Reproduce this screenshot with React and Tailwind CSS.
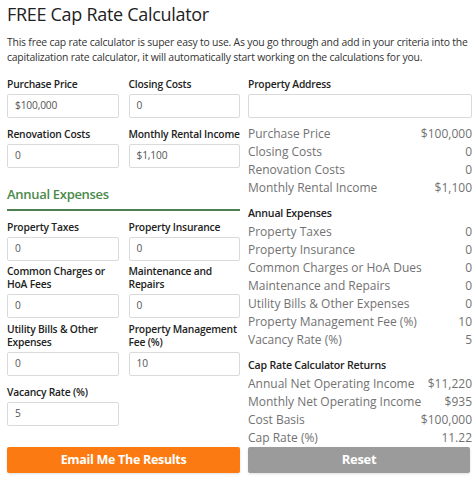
import React from 'react';

const font = { fontFamily: '"Open Sans", "Noto Sans", sans-serif' };

const Field = ({ label, value, className = '' }) => (
  <div className={className}>
    <label className="block text-[10.3px] leading-[13px] font-semibold tracking-[-0.2px] text-[#222] mb-[3px]">{label}</label>
    <div className="h-[24px] border border-[#dadada] rounded-[2px] bg-white px-[7px] flex items-center text-[10.2px] tracking-[-0.15px] text-[#555]">
      {value}
    </div>
  </div>
);

const Row = ({ label, value }) => (
  <div className="flex justify-between h-[18px] items-center text-[12px] text-[#727272]">
    <span>{label}</span>
    <span>{value}</span>
  </div>
);

const Heading = ({ children, className = '' }) => (
  <div className={`h-[18px] flex items-center text-[10.6px] font-semibold tracking-[-0.2px] text-[#222] ${className}`}>{children}</div>
);

export default function App() {
  return (
    <div className="w-[474px] h-[478px] bg-white pl-[7px] pr-[2px] overflow-hidden" style={font}>
      <h1 className="text-[18px] leading-[28px] tracking-[-0.3px] text-[#222]">FREE Cap Rate Calculator</h1>
      <p className="mt-[7px] text-[10.4px] leading-[15px] tracking-[-0.2px] text-[#333]">
        This free cap rate calculator is super easy to use. As you go through and add in your criteria into the capitalization rate calculator, it will automatically start working on the calculations for you.
      </p>

      <div className="grid grid-cols-[233px_224px] gap-x-[8px] mt-[13px]">
        <div>
          <div className="grid grid-cols-2 gap-x-[10px]">
            <Field label="Purchase Price" value="$100,000" />
            <Field label="Closing Costs" value="0" />
          </div>
          <div className="grid grid-cols-2 gap-x-[10px] mt-[10px]">
            <Field label="Renovation Costs" value="0" />
            <Field label="Monthly Rental Income" value="$1,100" />
          </div>
          <h2 className="mt-[15px] text-[13px] leading-[22px] font-semibold tracking-[-0.3px] text-[#4a8a4a]">Annual Expenses</h2>
          <div className="mt-[4px] h-[2px] bg-[#4f7f4f]" />
          <div className="grid grid-cols-2 gap-x-[10px] mt-[10px]">
            <Field label="Property Taxes" value="0" />
            <Field label="Property Insurance" value="0" />
          </div>
          <div className="grid grid-cols-2 gap-x-[10px] mt-[4px]">
            <Field label="Common Charges or HoA Fees" value="0" />
            <Field label="Maintenance and Repairs" value="0" />
          </div>
          <div className="grid grid-cols-2 gap-x-[10px] mt-[5px]">
            <Field label="Utility Bills & Other Expenses" value="0" />
            <Field label="Property Management Fee (%)" value="10" />
          </div>
          <div className="grid grid-cols-2 gap-x-[10px] mt-[10px]">
            <Field label="Vacancy Rate (%)" value="5" />
          </div>
        </div>

        <div>
          <Field label="Property Address" value="" />
          <div className="mt-[7px]">
            <Row label="Purchase Price" value="$100,000" />
            <Row label="Closing Costs" value="0" />
            <Row label="Renovation Costs" value="0" />
            <Row label="Monthly Rental Income" value="$1,100" />
          </div>
          <Heading className="mt-[8px]">Annual Expenses</Heading>
          <Row label="Property Taxes" value="0" />
          <Row label="Property Insurance" value="0" />
          <Row label="Common Charges or HoA Dues" value="0" />
          <Row label="Maintenance and Repairs" value="0" />
          <Row label="Utility Bills & Other Expenses" value="0" />
          <Row label="Property Management Fee (%)" value="10" />
          <Row label="Vacancy Rate (%)" value="5" />
          <Heading className="mt-[8px]">Cap Rate Calculator Returns</Heading>
          <Row label="Annual Net Operating Income" value="$11,220" />
          <Row label="Monthly Net Operating Income" value="$935" />
          <Row label="Cost Basis" value="$100,000" />
          <Row label="Cap Rate (%)" value="11.22" />
        </div>

        <button className="h-[26px] bg-[#fb7b12] rounded-[2px] text-white font-bold text-[12.5px] tracking-[-0.3px] shadow-sm">
          Email Me The Results
        </button>
        <button className="h-[26px] w-[222px] bg-[#9b9b9b] rounded-[2px] text-white font-bold text-[13px] tracking-[-0.3px] shadow-sm">
          Reset
        </button>
      </div>
    </div>
  );
}
